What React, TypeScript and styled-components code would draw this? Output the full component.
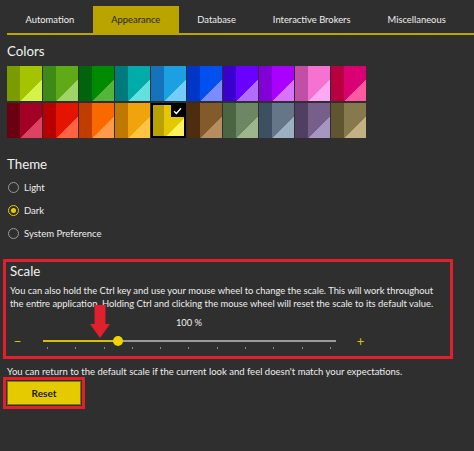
import React from "react";
import styled, { createGlobalStyle } from "styled-components";

const GlobalStyle = createGlobalStyle`
  html, body {
    margin: 0;
    padding: 0;
    background: #2f2f2f;
  }
  body {
    font-family: Lato, "Open Sans", "Noto Sans", sans-serif;
    color: #ececec;
  }
`;

const ACCENT = "#b9a400";
const RED = "#e0202c";

type Swatch = [string, string, string];

const rowOne: Swatch[] = [
  ["#7a9c01", "#a5c400", "#d6f04c"],
  ["#3d8a17", "#60a917", "#9fd468"],
  ["#00650a", "#008a00", "#55b43a"],
  ["#007a7c", "#00aba9", "#62e0dc"],
  ["#1473ba", "#1ba1e2", "#72cdfa"],
  ["#0036c8", "#0050ef", "#7a8cff"],
  ["#3a00cc", "#6a00ff", "#b16dff"],
  ["#8200d6", "#aa00ff", "#d873ff"],
  ["#c24fa6", "#f472d0", "#ffa8f4"],
  ["#b8003e", "#d80073", "#ff5aa0"],
];

const rowTwo: Swatch[] = [
  ["#6a0012", "#a20025", "#de4262"],
  ["#b80000", "#e51400", "#ff6342"],
  ["#c23c00", "#fa6800", "#ff9a4a"],
  ["#c17800", "#f0a30a", "#ffc442"],
  ["#b9a200", "#e3c800", "#fff060"],
  ["#4e2c0e", "#825a2c", "#b58d5e"],
  ["#4a6641", "#6d8764", "#9db68d"],
  ["#3d5062", "#647687", "#9bb0c1"],
  ["#4e3f63", "#76608a", "#a995c1"],
  ["#5f5530", "#87794e", "#c2b182"],
];

const Page = styled.div`
  padding: 0 0 0 7px;
  min-height: 451px;
  box-sizing: border-box;
  overflow: hidden;
`;

const TabBar = styled.div`
  display: flex;
  align-items: flex-end;
  height: 33px;
  border-bottom: 2px solid ${ACCENT};
`;

const Tab = styled.div<{ $active?: boolean }>`
  padding: 0 18.5px;
  height: 27px;
  line-height: 27px;
  font-size: 9.4px;
  white-space: nowrap;
  background: ${({ $active }) => ($active ? ACCENT : "transparent")};
  color: ${({ $active }) => ($active ? "#2b2600" : "#f0f0f0")};
`;

const Heading = styled.h2<{ $top: number }>`
  margin: ${({ $top }) => $top}px 0 0;
  font-size: 13.3px;
  font-weight: 400;
  line-height: 16px;
  color: #f2f2f2;
`;

const SwatchGrid = styled.div`
  display: grid;
  grid-template-columns: repeat(10, 35px);
  grid-auto-rows: 35px;
  column-gap: 1px;
  row-gap: 2px;
  margin-top: 7px;
`;

const SwatchBox = styled.div<{ $dark: string; $mid: string; $light: string; $selected?: boolean }>`
  position: relative;
  box-sizing: border-box;
  background:
    linear-gradient(to right, ${({ $dark }) => $dark} 0 13px, transparent 13px),
    linear-gradient(315deg, ${({ $light }) => $light} 15.5px, ${({ $mid }) => $mid} 15.5px);
  box-shadow: ${({ $selected }) => ($selected ? "inset 0 0 0 2px #000" : "none")};
`;

const CheckBadge = styled.div`
  position: absolute;
  top: 2px;
  right: 2px;
  width: 13px;
  height: 12px;
  background: #000;
  display: flex;
  align-items: center;
  justify-content: center;
`;

const RadioList = styled.div`
  display: flex;
  flex-direction: column;
  gap: 8px;
  margin-top: 8px;
`;

const RadioRow = styled.label`
  display: flex;
  align-items: center;
  gap: 5px;
  height: 15px;
  font-size: 9.5px;
  color: #eeeeee;
`;

const RadioDot = styled.span<{ $checked?: boolean }>`
  box-sizing: border-box;
  width: 11px;
  height: 11px;
  margin-left: 1px;
  border-radius: 50%;
  border: 1.5px solid ${({ $checked }) => ($checked ? "#e8cc00" : "#9a9a9a")};
  display: flex;
  align-items: center;
  justify-content: center;
  &::after {
    content: "";
    display: ${({ $checked }) => ($checked ? "block" : "none")};
    width: 5px;
    height: 5px;
    border-radius: 50%;
    background: #e8cc00;
  }
`;

const ScaleBox = styled.section`
  position: relative;
  margin: 18px 0 0 -4px;
  width: 450px;
  height: 100px;
  box-sizing: border-box;
  border: 3px solid ${RED};
  padding: 1px 0 0 4px;
`;

const ScaleTitle = styled.h2`
  margin: 0;
  font-size: 13.3px;
  font-weight: 400;
  line-height: 16px;
  color: #f2f2f2;
`;

const Body = styled.p`
  margin: 5px 0 0;
  padding-right: 8px;
  font-size: 9.4px;
  line-height: 13px;
  color: #eeeeee;
`;

const Percent = styled.div`
  width: 358px;
  text-align: center;
  margin-top: 6px;
  font-size: 9.4px;
  line-height: 13px;
  color: #eeeeee;
`;

const SliderRow = styled.div`
  display: flex;
  align-items: center;
  height: 16px;
  margin-top: 4px;
`;

const Sign = styled.span`
  width: 15px;
  text-align: center;
  color: #e0c400;
  font-size: 13px;
  line-height: 16px;
`;

const Track = styled.div`
  position: relative;
  width: 293px;
  height: 2px;
  margin: 0 17px 0 18px;
  background: #9a9a9a;
`;

const TrackFill = styled.div`
  position: absolute;
  left: 0;
  top: 0;
  height: 2px;
  background: #d8c000;
`;

const Thumb = styled.div`
  position: absolute;
  top: -4px;
  width: 10px;
  height: 10px;
  margin-left: -5px;
  border-radius: 50%;
  background: #f0d400;
`;

const Ticks = styled.div`
  position: absolute;
  left: 4px;
  right: 5px;
  top: 7px;
  display: flex;
  justify-content: space-between;
`;

const Tick = styled.span`
  width: 1px;
  height: 2px;
  background: #8a8a8a;
`;

const Arrow = styled.svg`
  position: absolute;
  left: 84px;
  top: 43px;
`;

const Note = styled.p`
  margin: 7px 0 0;
  font-size: 9.5px;
  line-height: 11px;
  color: #eeeeee;
`;

const ResetFrame = styled.div`
  display: inline-block;
  margin: 0 0 0 -4px;
  border: 3px solid ${RED};
  padding: 1px;
`;

const ResetButton = styled.button`
  display: block;
  width: 74px;
  height: 24px;
  background: #e5ca00;
  border: 1px solid #8a7a00;
  color: #1e1a00;
  font-family: inherit;
  font-size: 10px;
  font-weight: 700;
  cursor: pointer;
`;

const tabs = ["Automation", "Appearance", "Database", "Interactive Brokers", "Miscellaneous"];

const App: React.FC = () => {
  const value = 0.256;
  return (
    <Page>
      <GlobalStyle />
      <TabBar>
        {tabs.map((t) => (
          <Tab key={t} $active={t === "Appearance"}>
            {t}
          </Tab>
        ))}
      </TabBar>

      <Heading $top={8}>Colors</Heading>
      <SwatchGrid>
        {[...rowOne, ...rowTwo].map(([d, m, l], i) => (
          <SwatchBox key={i} $dark={d} $mid={m} $light={l} $selected={i === 14}>
            {i === 14 && (
              <CheckBadge>
                <svg width="9" height="8" viewBox="0 0 9 8">
                  <path d="M1 4.2 L3.4 6.5 L8 1.2" fill="none" stroke="#fff" strokeWidth="1.3" />
                </svg>
              </CheckBadge>
            )}
          </SwatchBox>
        ))}
      </SwatchGrid>

      <Heading $top={18}>Theme</Heading>
      <RadioList>
        <RadioRow>
          <RadioDot />
          Light
        </RadioRow>
        <RadioRow>
          <RadioDot $checked />
          Dark
        </RadioRow>
        <RadioRow>
          <RadioDot />
          System Preference
        </RadioRow>
      </RadioList>

      <ScaleBox>
        <ScaleTitle>Scale</ScaleTitle>
        <Body>
          You can also hold the Ctrl key and use your mouse wheel to change the scale. This will work throughout
          the entire application. Holding Ctrl and clicking the mouse wheel will reset the scale to its default value.
        </Body>
        <Percent>100 %</Percent>
        <SliderRow>
          <Sign>−</Sign>
          <Track>
            <TrackFill style={{ width: `${value * 100}%` }} />
            <Thumb style={{ left: `${value * 100}%` }} />
            <Ticks>
              {Array.from({ length: 11 }).map((_, i) => (
                <Tick key={i} />
              ))}
            </Ticks>
          </Track>
          <Sign>+</Sign>
        </SliderRow>
        <Arrow width="20" height="34" viewBox="0 0 20 34">
          <rect x="4.5" y="0" width="11" height="20" fill={RED} />
          <polygon points="0,19 20,19 10,33" fill={RED} />
        </Arrow>
      </ScaleBox>

      <Note>You can return to the default scale if the current look and feel doesn't match your expectations.</Note>
      <ResetFrame>
        <ResetButton>Reset</ResetButton>
      </ResetFrame>
    </Page>
  );
};

export default App;
